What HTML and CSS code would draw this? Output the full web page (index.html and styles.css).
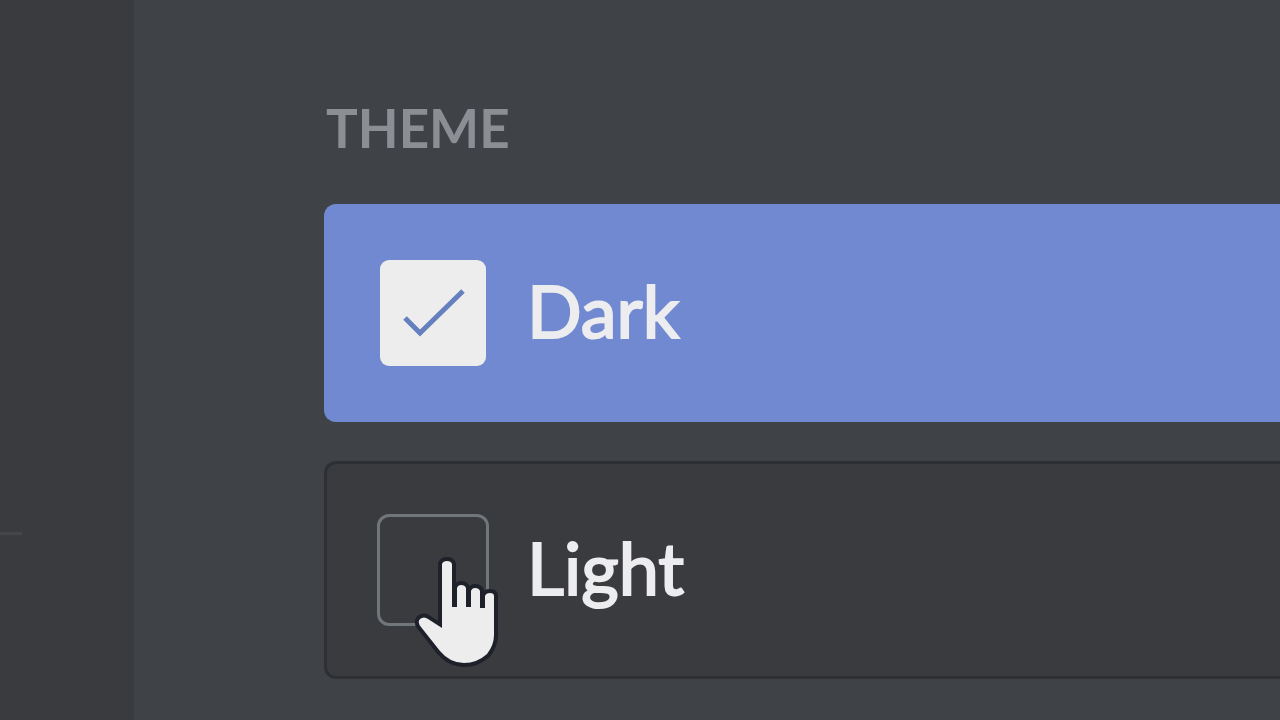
FILE: index.html
```html
<!DOCTYPE html>
<html lang="en">
<head>
    <meta charset="UTF-8">
    <meta name="viewport" content="width=device-width, initial-scale=1.0">
    <title>Appearance</title>
    <link rel="stylesheet" href="styles.css">
</head>
<body>

    <div class="settings">
        <nav class="sidebar">
            <hr class="separator">
        </nav>

        <main class="content">
            <h1 class="title">THEME</h1>

            <div class="options">
                <label class="option selected" for="dark">
                    <span class="check">
                        <input type="checkbox" id="dark" checked>
                        <svg class="tick" viewBox="0 0 112 112">
                            <path d="M28 61 L43 76 L86 34" fill="none" stroke="#6480bf" stroke-width="5"/>
                        </svg>
                    </span>
                    <span class="name">Dark</span>
                </label>

                <label class="option" for="light">
                    <span class="check">
                        <input type="checkbox" id="light">
                        <svg class="pointer" viewBox="0 0 92 116">
                            <path d="M35 11 Q36 8 40 8 Q44 8 45 11 V54 H50 V35 Q51 32 54 32 Q58 32 59 35 V54 H64 V38 Q65 35 68 35 Q72 35 73 38 V55 H78 V43 Q79 40 83 40 Q87 40 87 43 V82 Q87 92 80 101 Q70 110 57 110 Q43 110 33 98 L14 74 Q10 69 13 66 Q17 63 21 66 L35 75 Z" fill="#ededed" stroke="#1f212a" stroke-width="8" stroke-linejoin="round" paint-order="stroke"/>
                        </svg>
                    </span>
                    <span class="name">Light</span>
                </label>
            </div>
        </main>
    </div>

</body>
</html>
```
FILE: styles.css
```css
* {
    box-sizing: border-box;
}

body {
    margin: 0;
    font-family: Lato, "Open Sans", sans-serif;
    background-color: #3f4247;
    color: #ededf0;
}

.settings {
    display: flex;
    min-height: 100vh;
    overflow: hidden;
}

.sidebar {
    flex: 0 0 134px;
    padding-top: 532px;
    background-color: #3a3b3e;
}

.separator {
    width: 22px;
    height: 3px;
    margin: 0;
    border: none;
    background-color: #45464a;
}

.content {
    flex: 1;
    padding: 100px 0 40px 190px;
}

.title {
    margin: 0 0 48px;
    padding-left: 2px;
    font-size: 53px;
    line-height: 56px;
    font-weight: bold;
    color: #8b8f94;
}

.options {
    display: flex;
    flex-direction: column;
    gap: 39px;
}

.option {
    display: flex;
    align-items: center;
    gap: 38px;
    padding: 50px;
    border: 3px solid #2e2f33;
    border-right: none;
    border-radius: 12px 0 0 12px;
    background-color: #3a3b3f;
    cursor: pointer;
}

.selected {
    border-color: #7189d0;
    background-color: #7189d0;
}

.check {
    position: relative;
    width: 112px;
    height: 112px;
}

.check input {
    appearance: none;
    display: block;
    width: 100%;
    height: 100%;
    margin: 0;
    border: 3px solid #71767a;
    border-radius: 12px;
    cursor: pointer;
}

.check input:checked {
    border-color: transparent;
    background-color: #ededed;
    background-clip: padding-box;
}

.tick {
    position: absolute;
    inset: 0;
}

.pointer {
    position: absolute;
    top: 39px;
    left: 30px;
    width: 92px;
    height: 116px;
}

.name {
    padding-bottom: 6px;
    font-size: 72px;
    line-height: 80px;
    -webkit-text-stroke: 2px #ededf0;
}
```
